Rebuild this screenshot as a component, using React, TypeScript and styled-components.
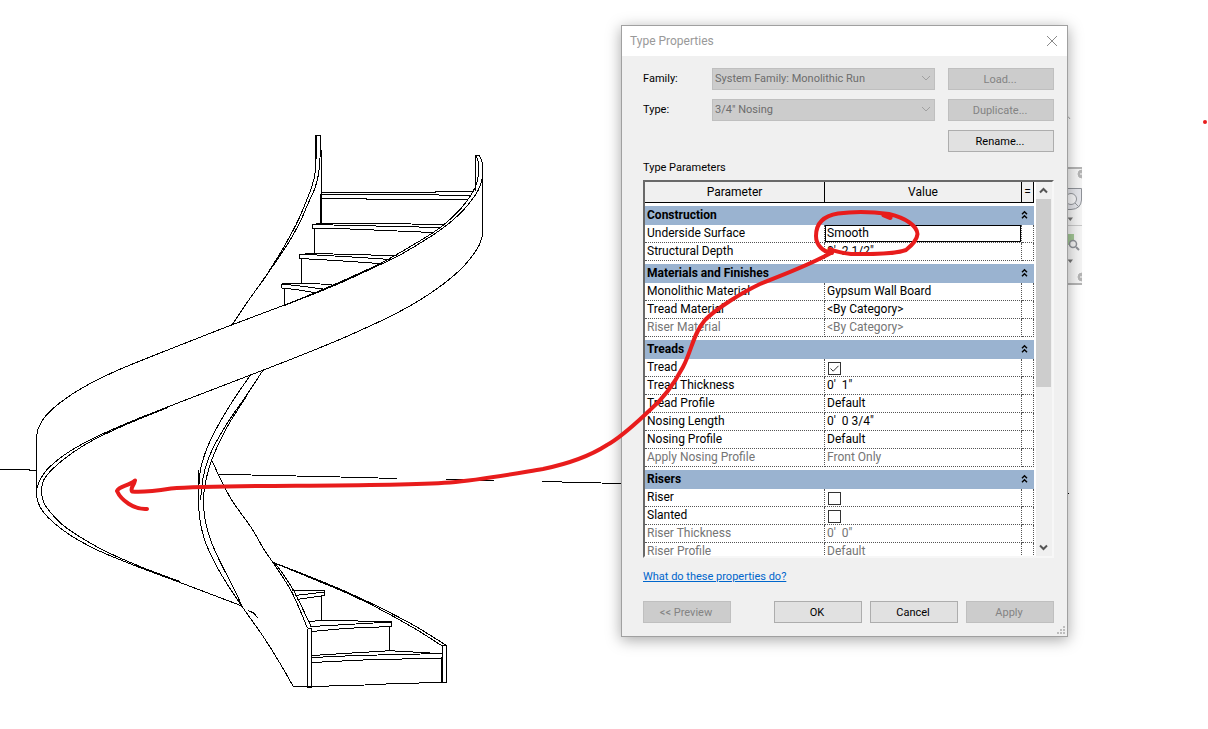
import React from "react";
import styled, { createGlobalStyle, css } from "styled-components";

const ui = 'Roboto, "Noto Sans", sans-serif';

const GlobalStyle = createGlobalStyle`
  *, *::before, *::after { box-sizing: border-box; }
  body { margin: 0; background: #fff; }
  button, select, input { font: inherit; color: inherit; }
`;

const Workspace = styled.main`
  position: relative;
  min-height: 100vh;
  overflow: hidden;
  background: #fff;
  color: #000;
  font: 11px/16px ${ui};
`;

const ModelView = styled.svg`
  position: absolute;
  top: 0;
  left: 0;
  fill: none;
  stroke: #000;
  stroke-width: 1;
  shape-rendering: crispEdges;
`;

const Markup = styled.svg`
  position: absolute;
  top: 0;
  left: 0;
  pointer-events: none;
  fill: none;
  stroke: #e81c1c;
  stroke-width: 4;
  stroke-linecap: round;
  stroke-linejoin: round;
`;

const Dialog = styled.section`
  position: absolute;
  top: 25px;
  left: 621px;
  width: 447px;
  border: 1px solid #a0a0a0;
  background: #f0f0f0;
  box-shadow: 0 3px 14px rgba(0, 0, 0, 0.35);
`;

const TitleBar = styled.header`
  display: flex;
  align-items: center;
  justify-content: space-between;
  height: 30px;
  padding: 0 7px 0 8px;
  background: #fff;
  color: #999;
`;

const Title = styled.h1`
  margin: 0;
  font-size: 12px;
  font-weight: 400;
`;

const CloseButton = styled.button`
  display: flex;
  padding: 2px;
  border: 0;
  background: none;
  color: #8a8a8a;
`;

const Body = styled.div`
  padding: 12px 13px 13px 21px;
`;

const TypeForm = styled.div`
  display: grid;
  grid-template-columns: 69px 1fr 106px;
  grid-auto-rows: 22px;
  row-gap: 9px;
  align-items: center;
`;

const SelectBox = styled.div`
  position: relative;
  display: flex;
  margin-right: 13px;
  color: #6d6d6d;
`;

const Select = styled.select`
  appearance: none;
  width: 100%;
  height: 22px;
  padding: 0 2px;
  border: 1px solid #bfbfbf;
  border-radius: 0;
  background: #ccc;
  opacity: 1;
`;

const SelectArrow = styled.svg`
  position: absolute;
  top: 7px;
  right: 4px;
  fill: none;
  stroke: #a0a0a0;
  pointer-events: none;
`;

const Button = styled.button<{ $last?: boolean }>`
  height: 22px;
  padding: 2px 2px 0 0;
  border: 1px solid #adadad;
  border-radius: 0;
  background: #e1e1e1;
  ${(p) => p.$last && css`grid-column: 3;`}
  &:disabled {
    border-color: #bfbfbf;
    background: #ccc;
    color: #838383;
  }
`;

const Caption = styled.h2`
  margin: 8px 0 4px;
  font-size: 11px;
  font-weight: 400;
`;

const Frame = styled.div`
  display: flex;
  height: 378px;
  border: 2px solid;
  border-color: #696969 #f7f7f7 #f7f7f7 #696969;
  background: #fff;
`;

const Scroller = styled.div`
  flex: 1;
  overflow: hidden;
`;

const Grid = styled.table`
  width: 100%;
  table-layout: fixed;
  border-collapse: separate;
  border-spacing: 0;
  font-size: 12px;
  line-height: 16px;
`;

const HeadCell = styled.th<{ $width?: number }>`
  width: ${(p) => (p.$width ? `${p.$width}px` : "auto")};
  height: 21px;
  padding: 0;
  border-right: 1px solid #000;
  border-bottom: 1px solid #000;
  background: #f0f0f0;
  font-weight: 400;
`;

const GroupCell = styled.th`
  height: 22px;
  padding: 1px 5px 0 2px;
  border-top: 3px solid #fff;
  background: #9ab3d0;
  text-align: left;
  vertical-align: top;
`;

const GroupInner = styled.div`
  display: flex;
  align-items: center;
  justify-content: space-between;
`;

const Toggle = styled.button`
  display: flex;
  padding: 0;
  border: 0;
  background: none;
`;

const Row = styled.tr<{ $dim?: boolean }>`
  color: ${(p) => (p.$dim ? "#757575" : "#000")};
`;

const cell = css`
  height: 18px;
  padding: 0 2px;
  border-right: 1px dotted #555;
  border-bottom: 1px dotted #555;
  text-align: left;
  vertical-align: top;
  font-weight: 400;
  white-space: pre;
`;

const NameCell = styled.th`
  ${cell}
`;

const ValueCell = styled.td<{ $active?: boolean }>`
  ${cell}
  ${(p) => p.$active && css`box-shadow: inset 0 0 0 1px #000;`}
`;

const CheckBox = styled.span`
  position: relative;
  display: flex;
  height: 16px;
  padding: 3px 0 0 1px;
`;

const Check = styled.input`
  appearance: none;
  width: 13px;
  height: 13px;
  margin: 0;
  border: 1px solid #333;
  background: #fff;
`;

const Tick = styled.svg`
  position: absolute;
  top: 3px;
  left: 1px;
  fill: none;
  stroke: #333;
  pointer-events: none;
`;

const ScrollBar = styled.div`
  display: flex;
  flex-direction: column;
  width: 16px;
  margin-left: 2px;
  background: #f0f0f0;
`;

const ScrollButton = styled.button`
  display: flex;
  align-items: center;
  justify-content: center;
  height: 17px;
  padding: 0 1px 0 0;
  border: 0;
  background: none;
  color: #555;
`;

const Thumb = styled.div`
  height: 188px;
  margin: 0 1px 0 0;
  background: #cdcdcd;
`;

const Spacer = styled.div`
  flex: 1;
`;

const Help = styled.a`
  display: block;
  width: max-content;
  margin-top: 11px;
  color: #0066cc;
`;

const Actions = styled.footer`
  display: grid;
  grid-template-columns: 88px 1fr 88px 88px 88px;
  column-gap: 8px;
  margin-top: 16px;
`;

const Grip = styled.svg`
  position: absolute;
  right: 2px;
  bottom: 2px;
  fill: #bdbdbd;
`;

type Item = { name: string; value?: string; check?: boolean; dim?: boolean; active?: boolean };

const groups: { title: string; items: Item[] }[] = [
  {
    title: "Construction",
    items: [
      { name: "Underside Surface", value: "Smooth", active: true },
      { name: "Structural Depth", value: "0'  2 1/2\"" },
    ],
  },
  {
    title: "Materials and Finishes",
    items: [
      { name: "Monolithic Material", value: "Gypsum Wall Board" },
      { name: "Tread Material", value: "<By Category>" },
      { name: "Riser Material", value: "<By Category>", dim: true },
    ],
  },
  {
    title: "Treads",
    items: [
      { name: "Tread", check: true },
      { name: "Tread Thickness", value: "0'  1\"" },
      { name: "Tread Profile", value: "Default" },
      { name: "Nosing Length", value: "0'  0 3/4\"" },
      { name: "Nosing Profile", value: "Default" },
      { name: "Apply Nosing Profile", value: "Front Only", dim: true },
    ],
  },
  {
    title: "Risers",
    items: [
      { name: "Riser", check: false },
      { name: "Slanted", check: false },
      { name: "Riser Thickness", value: "0'  0\"", dim: true },
      { name: "Riser Profile", value: "Default", dim: true },
    ],
  },
];

type Point = [number, number];

// Catmull-Rom spline through the given points, as cubic segments
const spline = (p: Point[]) => {
  let d = `M${p[0][0]} ${p[0][1]}`;
  for (let i = 0; i < p.length - 1; i++) {
    const a = p[i - 1] ?? p[i];
    const b = p[i];
    const c = p[i + 1];
    const e = p[i + 2] ?? c;
    d += `C${b[0] + (c[0] - a[0]) / 6} ${b[1] + (c[1] - a[1]) / 6} ${c[0] - (e[0] - b[0]) / 6} ${c[1] - (e[1] - b[1]) / 6} ${c[0]} ${c[1]}`;
  }
  return d;
};

const stairCurves: Point[][] = [
  // upper left stringer
  [[320.5, 150], [318.7, 173], [315, 188], [308.3, 203], [300, 222], [288.3, 243], [262, 282]],
  [[315.5, 160], [315.3, 172], [312, 186], [306.7, 200], [298.3, 220], [286.7, 242], [271.7, 267], [261.7, 282], [246.7, 303], [232.3, 324.5]],
  // outer stringer, lower edge
  [[482.5, 235], [479, 245.5], [471.7, 256.7], [460, 270], [443, 284.3], [420, 300], [393, 315], [366.7, 327.5], [339.3, 339.7], [300, 355.7], [261.7, 370.7], [213.3, 389.3], [166.7, 407.3], [126.7, 423.3], [93.3, 438.3], [66.7, 453.3], [46.7, 470], [38.5, 483.3], [36.5, 493], [38, 502], [43.3, 512], [54, 523], [70, 535], [90, 546.5], [112, 556.5], [145, 569.5], [180, 582.5], [242, 606]],
  [[166.7, 408], [126.7, 424.3], [93.3, 440], [71.7, 453.3], [53.3, 468.3], [43.8, 480], [41.5, 492], [44, 503], [51, 513], [64, 526], [85, 540], [108, 552.5], [145, 568.5], [180, 581.5]],
  // outer stringer, upper edge
  [[476.5, 156], [478.5, 164], [478.5, 174], [476.5, 184], [473, 191.5], [466.5, 201.5], [458, 211.7], [443.5, 225], [426.7, 236.7], [396.7, 254.5], [380, 263.7], [356.7, 274.5], [333.3, 285], [308.3, 295.5], [283.3, 305.5], [232.3, 324.7], [200, 337.3], [163.3, 351.7], [116.7, 370.7], [83.3, 387.3], [60, 402.7], [45, 416.7], [38.3, 428.3], [36.5, 438]],
  [[482.5, 178], [478.3, 190], [471.7, 200], [463, 210.5], [450, 222.5], [433, 235], [400, 255], [380, 264.7], [356.7, 275.5], [333.3, 286], [283.3, 306]],
  // inner stringer
  [[250.5, 375], [233.3, 400], [218.3, 425], [208.3, 445], [202, 463], [199.5, 477], [198.5, 500], [200, 520], [205, 541], [215, 563.3], [226.7, 583.3], [241.7, 606], [263.3, 636.7], [280, 663.3], [293, 686]],
  [[262.5, 371], [246.7, 395], [230, 419], [216.7, 441], [208.3, 459], [203, 478], [200.5, 500]],
  [[246.7, 396], [230, 422], [220, 441], [211.7, 460], [206.7, 476.7], [204, 492], [203.5, 505], [205.5, 522], [211.7, 543], [221.7, 565], [233, 586.7], [242, 606]],
  [[211.7, 460], [218.3, 474.3], [231.7, 500], [251.7, 528.3], [263.3, 548.3], [273.3, 563], [282, 576], [291.7, 592], [300, 610], [307.5, 628.5]],
  [[274.5, 562.5], [283, 574], [293.3, 590], [301.7, 606.7], [311.5, 627.5]],
  // lower right handrail
  [[273.3, 562.5], [313.3, 578], [346.7, 592], [376.7, 606], [413.3, 625], [446.5, 645.5]],
  [[273.3, 562.5], [313.3, 579], [346.7, 593], [376.7, 607.5], [413.3, 627.7], [443, 646.5]],
];

const stairLines = [
  // posts
  "M315.5 165V135.5H320.5V150M316.5 136V159M321.5 150V223M320.5 194V223",
  "M475.5 191V155.5H479.5L482.5 163V235M36.5 437V492",
  "M198.5 470V500M307.5 628.5V687H311.5V627.5M307.5 628.5H311",
  "M442 645.5H446.5V682.5H442.5V646.5M441.5 657V682",
  // upper treads
  "M321 192.5H435V191.5H473M321 194.5H407L470 195.5M321 198.5H366V199.5H468",
  "M316 223.5H377L445 224.5M312.5 228.5V224.5L333 225L440 227.5M312.5 228.5L350 229L433 232.5M314.5 228V253",
  "M305 253.5L333 254L397 255.7M299.5 258.5V254.5L317 255L357 257.3L390 259.5M299.5 258.5L333 260.3L382 263.7M301.5 258V283",
  "M281.5 283.5H312L332 284.7M281.5 283.5V288L297 289.7L315 292.7M281.5 284L300 286L323 289M284.5 288V304",
  // base
  "M293 686.5H311L365 685L397 683.5L442 682.5",
  // lower treads
  "M291.7 590.5H324.5V595.5L296.7 599.5M295 595.5L324.5 592M321.5 596V620",
  "M308 621.5L323 620.5L391.5 621.5V626.5L346.7 628.3L311.7 631.5M311.7 626.5L346.7 624.5L391.5 622M389.5 626V651",
  "M311.7 655.5L390 650.7L435 653.3M311.7 657.5L356.7 655.5L442 653.5M311.7 662.5L363 660L442 658",
  "M248.3 610.7L253.3 612.7L257.7 617.7",
  // floor line
  "M0 469.5H29V470.5H36M218 474.5L251 475L296 476L340 477L397.5 478.5M446 479L494 480.5M542 481.5L621 483.5M1067 493.5H1069",
];

const Chevrons = () => (
  <svg width="9" height="10" viewBox="0 0 9 10" fill="none" stroke="#000" strokeWidth="1.4">
    <path d="M2 4.2L4.5 1.7L7 4.2M2 8.2L4.5 5.7L7 8.2" />
  </svg>
);

const DropDown = ({ id, value }: { id: string; value: string }) => (
  <SelectBox>
    <Select id={id} disabled>
      <option>{value}</option>
    </Select>
    <SelectArrow width="10" height="7" viewBox="0 0 10 7">
      <path d="M1 1L5 5L9 1" />
    </SelectArrow>
  </SelectBox>
);

export default function App() {
  return (
    <Workspace>
      <GlobalStyle />
      <ModelView width="1208" height="729" viewBox="0 0 1208 729" aria-hidden="true">
        {stairCurves.map((points, i) => (
          <path key={i} d={spline(points)} />
        ))}
        {stairLines.map((d) => (
          <path key={d} d={d} />
        ))}
        <g shapeRendering="auto" stroke="none">
          <path d="M1060 167H1082V285H1060Z" fill="#f4f4f4" />
          <path d="M1060 168H1082M1060 284H1082" stroke="#b4b4b4" strokeWidth="2" />
          <path d="M1060 225.5H1082" stroke="#c8c8c8" />
          <path d="M1060 188.5H1081.5V200Q1081 209 1071 209.5H1060" fill="#e4e5ea" stroke="#8f9298" />
          <circle cx="1071" cy="199" r="5.5" fill="#f6f6f8" stroke="#94979c" />
          <path d="M1075 203L1079 207" stroke="#94979c" />
          <path d="M1067.5 217.5H1073L1070.3 221ZM1067.5 259.5H1073L1070.3 263Z" fill="#777" />
          <path d="M1060 234H1074V245H1060Z" fill="#a3c796" />
          <circle cx="1073" cy="244" r="3.5" fill="#f2f2f2" stroke="#8f9298" strokeWidth="1.5" />
          <path d="M1076 247L1079 250" stroke="#8f9298" strokeWidth="2" />
          <path d="M1082 170A4 4 0 0 0 1082 178ZM1082 273A4 4 0 0 0 1082 281Z" fill="#b5b5b5" stroke="#b5b5b5" />
          <path d="M1080 174H1082M1080 277H1082" stroke="#fff" />
          <path d="M1082 160H1090V290H1082Z" fill="#fff" />
          <path d="M1066 117Q1069 116 1070 119" fill="none" stroke="#aaa" />
        </g>
      </ModelView>

      <Dialog role="dialog" aria-labelledby="dialog-title">
        <TitleBar>
          <Title id="dialog-title">Type Properties</Title>
          <CloseButton aria-label="Close">
            <svg width="12" height="12" viewBox="0 0 12 12" stroke="currentColor">
              <path d="M1 1L11 11M11 1L1 11" />
            </svg>
          </CloseButton>
        </TitleBar>
        <Body>
          <TypeForm>
            <label htmlFor="family">Family:</label>
            <DropDown id="family" value="System Family: Monolithic Run" />
            <Button disabled>Load...</Button>
            <label htmlFor="type">Type:</label>
            <DropDown id="type" value={'3/4" Nosing'} />
            <Button disabled>Duplicate...</Button>
            <Button $last>Rename...</Button>
          </TypeForm>
          <Caption>Type Parameters</Caption>
          <Frame>
            <Scroller>
              <Grid>
                <thead>
                  <tr>
                    <HeadCell $width={180}>Parameter</HeadCell>
                    <HeadCell>Value</HeadCell>
                    <HeadCell $width={12}>=</HeadCell>
                  </tr>
                </thead>
                {groups.map((group) => (
                  <tbody key={group.title}>
                    <tr>
                      <GroupCell colSpan={3}>
                        <GroupInner>
                          {group.title}
                          <Toggle aria-label={`Collapse ${group.title}`}>
                            <Chevrons />
                          </Toggle>
                        </GroupInner>
                      </GroupCell>
                    </tr>
                    {group.items.map((item) => (
                      <Row key={item.name} $dim={item.dim}>
                        <NameCell scope="row">{item.name}</NameCell>
                        <ValueCell $active={item.active}>
                          {item.check === undefined ? (
                            item.value
                          ) : (
                            <CheckBox>
                              <Check type="checkbox" aria-label={item.name} defaultChecked={item.check} />
                              {item.check && (
                                <Tick width="13" height="13" viewBox="0 0 13 13">
                                  <path d="M2.5 6.5L5.2 9.2L10.5 3.8" />
                                </Tick>
                              )}
                            </CheckBox>
                          )}
                        </ValueCell>
                        <ValueCell />
                      </Row>
                    ))}
                  </tbody>
                ))}
              </Grid>
            </Scroller>
            <ScrollBar>
              <ScrollButton aria-label="Scroll up">
                <svg width="9" height="7" viewBox="0 0 9 7" fill="none" stroke="currentColor" strokeWidth="2">
                  <path d="M1 5.5L4.5 2L8 5.5" />
                </svg>
              </ScrollButton>
              <Thumb />
              <Spacer />
              <ScrollButton aria-label="Scroll down">
                <svg width="9" height="7" viewBox="0 0 9 7" fill="none" stroke="currentColor" strokeWidth="2">
                  <path d="M1 1.5L4.5 5L8 1.5" />
                </svg>
              </ScrollButton>
            </ScrollBar>
          </Frame>
          <Help href="#properties-help">What do these properties do?</Help>
          <Actions>
            <Button disabled>&lt;&lt; Preview</Button>
            <span />
            <Button>OK</Button>
            <Button>Cancel</Button>
            <Button disabled>Apply</Button>
          </Actions>
        </Body>
        <Grip width="8" height="8" viewBox="0 0 8 8" aria-hidden="true">
          <path d="M6 0h2v2h-2zM3 3h2v2h-2zM6 3h2v2h-2zM0 6h2v2h-2zM3 6h2v2h-2zM6 6h2v2h-2z" />
        </Grip>
      </Dialog>

      <Markup width="1208" height="729" viewBox="0 0 1208 729" aria-hidden="true">
        <path d="M832 253C823 252 816 245 816 236C816 225 822 216 838 213.5C855 211 875 212 889 214C906 218 917 226 917.5 234C917 241 911 246 906 250C892 255 868 254 851 254C842 253 836 252 830 249" />
        <path d="M884 215L890 217.5" strokeWidth="5" />
        <path d="M830 253.5C805 267 782 275 760 284C741 293 716 309 705 320C693 334 692 350 683 367C674 384 664 398 650 410C637 422 623 436 607 445C590 456 567 464 543 469C513 474 481 480 450 482.5C411 485 345 485.5 296 485.7C254 486 190 487 171 488.5C155 491 141 492.5 132 491.5C130 487 134 486 135 480.5C129 486 119 486 117 491C121 500 134 510 147 509" />
        <circle cx="1205" cy="122" r="2" fill="#e81c1c" stroke="none" />
      </Markup>
    </Workspace>
  );
}
